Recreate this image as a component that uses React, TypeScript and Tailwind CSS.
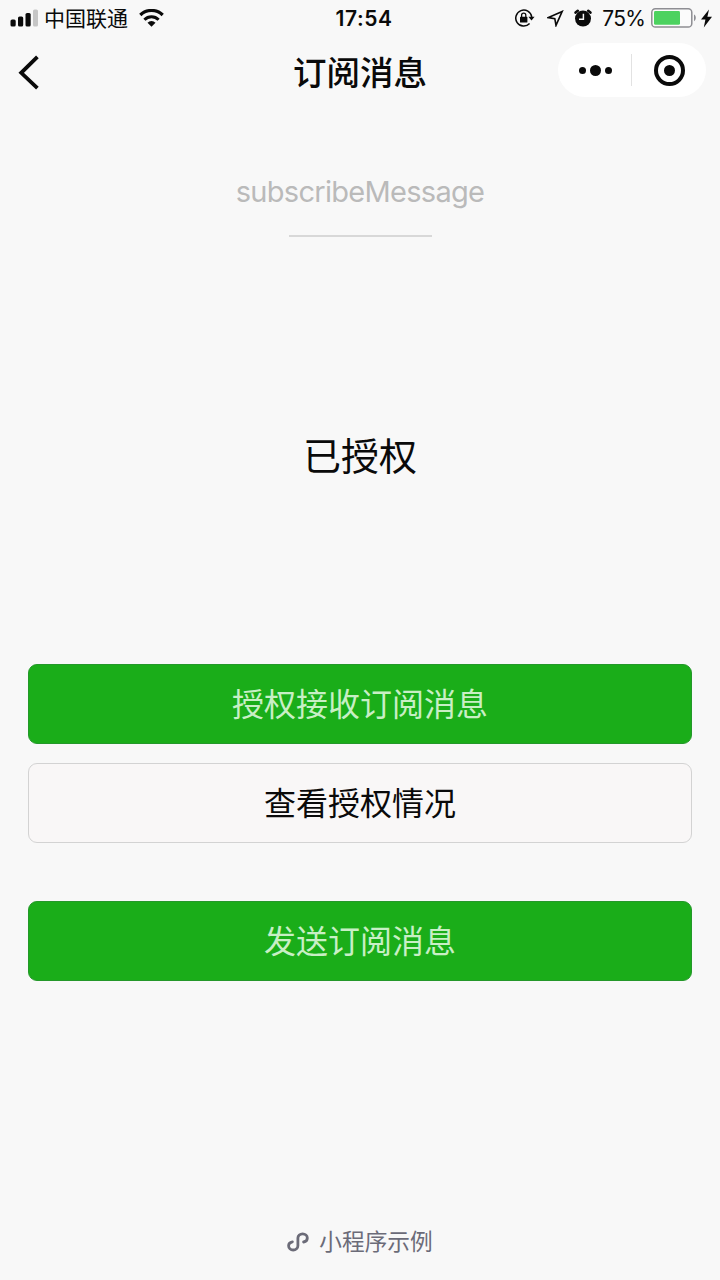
import type { ReactNode } from 'react';
import clsx from 'clsx';

function SignalIcon() {
  return (
    <svg width="28" height="18" viewBox="0 0 28 18" fill="#0a0a0a">
      <rect x="0.5" y="10.4" width="5.2" height="7.2" rx="1.6" />
      <rect x="8" y="7.4" width="5.2" height="10.2" rx="1.6" />
      <rect x="15.5" y="4" width="5.2" height="13.6" rx="1.6" />
      <rect x="23" y="0.4" width="5" height="17.2" rx="1.6" fill="#c6c6c6" />
    </svg>
  );
}

function WifiIcon() {
  return (
    <svg width="25" height="18" viewBox="0 0 25 18" fill="none" stroke="#0a0a0a">
      <path d="M1.3 6a16 16 0 0 1 22.4 0" strokeWidth="3.2" />
      <path d="M5.4 10.8a10 10 0 0 1 14.2 0" strokeWidth="3" />
      <path d="M12.5 17.8l-4-4.1a5.8 5.8 0 0 1 8 0z" fill="#0a0a0a" stroke="none" />
    </svg>
  );
}

function RotationLockIcon() {
  return (
    <svg width="20" height="18" viewBox="0 0 20 18" fill="none" stroke="#0a0a0a">
      <path d="M14.6 14.6A8 8 0 1 1 16.7 8" strokeWidth="1.5" />
      <path d="M13.4 7.8h6.2L16.5 11.6z" fill="#0a0a0a" stroke="none" />
      <rect x="5" y="7.8" width="7.4" height="5.8" rx="0.6" fill="#0a0a0a" stroke="none" />
      <path d="M6.6 8.4V6.2a2.1 2.1 0 0 1 4.2 0v2.2" strokeWidth="1.3" />
    </svg>
  );
}

function LocationIcon() {
  return (
    <svg width="17" height="17" viewBox="0 0 17 17" fill="none" stroke="#0a0a0a" strokeWidth="1.6">
      <path d="M15.2 1.4L1.4 7.6L7.8 8.6L9 15.4z" />
    </svg>
  );
}

function AlarmIcon() {
  return (
    <svg width="18" height="18" viewBox="0 0 18 18">
      <circle cx="9" cy="9.6" r="8" fill="#0a0a0a" />
      <path d="M1.6 3.6L3.8 1.8M16.4 3.6L14.2 1.8" stroke="#0a0a0a" strokeWidth="2.6" strokeLinecap="round" />
      <path d="M9.4 4.8V10.2H5" fill="none" stroke="#f7f7f7" strokeWidth="1.5" />
    </svg>
  );
}

function BatteryIcon() {
  return (
    <svg width="46" height="20" viewBox="0 0 46 20">
      <rect x="0.8" y="0.8" width="40" height="18.2" rx="3.6" fill="#fbfbfb" stroke="#8e8e93" strokeWidth="1.5" />
      <rect x="3" y="3" width="26" height="13.8" rx="1.4" fill="#4cd25f" />
      <path d="M43 6.6c2.4 1 2.4 5.6 0 6.6z" fill="#8e8e93" />
    </svg>
  );
}

function BoltIcon() {
  return (
    <svg width="11" height="19" viewBox="0 0 11 19" fill="#0a0a0a">
      <path d="M8 0.4L0 10.4h4.4L2.8 18.4L11 7.8H6.4z" />
    </svg>
  );
}

function MiniProgramIcon() {
  return (
    <svg width="22" height="20" viewBox="0 0 22 20" fill="none" stroke="#6b6b78" strokeWidth="2.8" strokeLinecap="round">
      <path d="M5.4 9.8C3.2 10.2 1.6 11.8 1.6 13.8C1.6 16.2 3.6 18 6.2 18C8.8 18 10.9 16.2 10.9 13.8V6C10.9 3.6 13 1.8 15.6 1.8C18.2 1.8 20.3 3.6 20.3 5.9C20.3 8 18.8 9.6 16.6 10" />
    </svg>
  );
}

function StatusBar() {
  return (
    <div className="grid h-9 grid-cols-3 items-center pr-2 pl-2.5">
      <div className="flex items-center">
        <SignalIcon />
        <span className="ml-1.5 text-[21px] leading-none">中国联通</span>
        <span className="ml-[11px]">
          <WifiIcon />
        </span>
      </div>
      <div className="pl-1.5 text-center text-[21px] leading-none font-semibold tracking-[0.6px]">17:54</div>
      <div className="flex items-center justify-end">
        <RotationLockIcon />
        <span className="ml-3">
          <LocationIcon />
        </span>
        <span className="ml-2.5">
          <AlarmIcon />
        </span>
        <span className="ml-2.5 text-[21px] leading-none tracking-[-0.8px]">75%</span>
        <span className="ml-1.5">
          <BatteryIcon />
        </span>
        <span className="ml-1">
          <BoltIcon />
        </span>
      </div>
    </div>
  );
}

function NavBar() {
  return (
    <div className="grid h-[72px] grid-cols-3 items-center pr-3.5 pl-[18px]">
      <svg width="22" height="36" viewBox="0 0 22 36" fill="none" stroke="#0a0a0a" strokeWidth="3.8">
        <path d="M19.4 2.8L3.2 18.8L19.4 34.2" />
      </svg>
      <h1 className="pt-1 pr-1 text-center text-[33.5px] leading-none font-medium whitespace-nowrap">订阅消息</h1>
      {/* Capsule */}
      <div className="mb-1 flex h-[54px] w-[148px] items-center justify-self-end rounded-full bg-white">
        <div className="flex w-[73px] items-center justify-center gap-1 pl-0.5">
          <span className="size-[7px] rounded-full bg-[#0a0a0a]" />
          <span className="size-[11px] rounded-full bg-[#0a0a0a]" />
          <span className="size-[7px] rounded-full bg-[#0a0a0a]" />
        </div>
        <div className="h-8 w-px bg-[#e2e2e2]" />
        <div className="flex flex-1 items-center justify-center pl-0.5">
          <span className="flex size-[31px] items-center justify-center rounded-full border-4 border-[#0a0a0a]">
            <span className="size-[11px] rounded-full bg-[#0a0a0a]" />
          </span>
        </div>
      </div>
    </div>
  );
}

function Button({ primary, className, children }: { primary?: boolean; className?: string; children: ReactNode }) {
  return (
    <button
      className={clsx(
        'flex h-20 w-full items-center justify-center rounded-[9px] border pt-0.5 text-[32px] leading-none',
        primary ? 'border-[#24982a] bg-[#1aad19] text-[#c8efc5]' : 'border-[#d3d3d3] bg-[#f9f7f7] text-[#0a0a0a]',
        className,
      )}
    >
      {children}
    </button>
  );
}

export default function App() {
  return (
    <div className="flex h-[1280px] w-[720px] flex-col bg-[#f8f8f8] font-['Inter','Noto_Sans_CJK_SC',sans-serif] text-[#0a0a0a]">
      <StatusBar />
      <NavBar />

      <main className="flex flex-1 flex-col items-center px-7">
        <div className="mt-[63px] flex h-10 items-center text-[29px] leading-none tracking-[-0.7px] text-[#bababa]">
          subscribeMessage
        </div>
        <div className="mt-6 h-0.5 w-[143px] bg-[#d8d8d8]" />

        <div className="mt-[199px] flex h-10 items-center text-[38px] leading-none">已授权</div>

        <div className="mt-[188px] w-full">
          <Button primary>授权接收订阅消息</Button>
          <Button className="mt-[19px]">查看授权情况</Button>
          <Button primary className="mt-[58px]">
            发送订阅消息
          </Button>
        </div>
      </main>

      <footer className="mb-[26px] flex h-6 items-center justify-center gap-2.5 text-[#6b6b78]">
        <MiniProgramIcon />
        <span className="text-[22.7px] leading-none">小程序示例</span>
      </footer>
    </div>
  );
}
